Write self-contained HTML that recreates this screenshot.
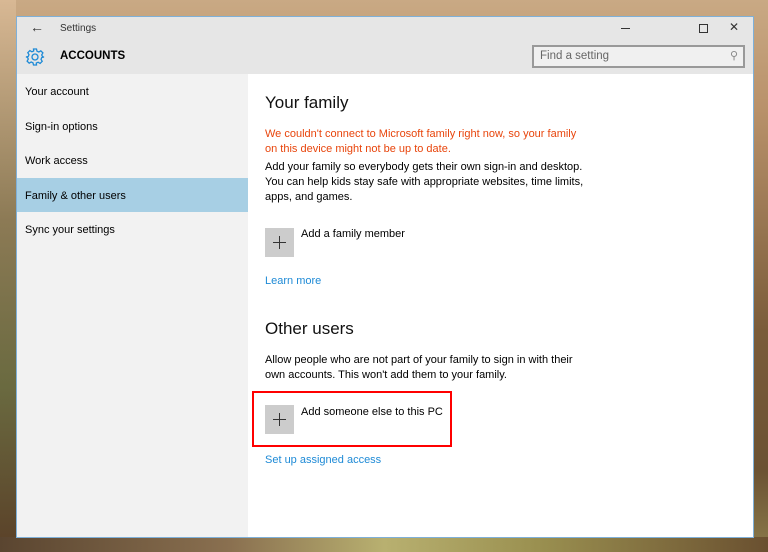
<!DOCTYPE html>
<html><head><style>
*{margin:0;padding:0;box-sizing:border-box}
body{width:768px;height:552px;overflow:hidden;position:relative;font-family:"Liberation Sans",sans-serif;
background:linear-gradient(180deg,#c9a984 0%,#b8916a 20%,#7a5c3a 60%,#6b5233 85%,#8a7a4a 100%);}
.bgl{position:absolute;left:0;top:0;width:16px;height:552px;background:linear-gradient(180deg,#d8b894,#8c7a55 40%,#6a6a40 70%,#5a4028)}
.bgb{position:absolute;left:0;top:537px;width:768px;height:15px;background:linear-gradient(90deg,#5a4530,#8a7050 30%,#b8b070 50%,#9a9050 70%,#6a5030)}
.win{position:absolute;left:16px;top:16px;width:738px;height:522px;border:1px solid #7fb0d8;background:#fff}
.title{position:absolute;left:0;top:0;width:736px;height:57px;background:#e6e6e6}
.side{position:absolute;left:0;top:57px;width:231px;height:463px;background:#f2f2f2}
.t{position:absolute;font-size:12px;color:#000;white-space:nowrap}
.link{color:#1e8ad6}
.plus{position:absolute;width:29px;height:29px;background:#cccccc}
.plus:before{content:"";position:absolute;left:8px;top:14px;width:13px;height:1px;background:#333}
.plus:after{content:"";position:absolute;left:14px;top:8px;width:1px;height:13px;background:#333}
</style></head><body>
<div class="bgl"></div><div class="bgb"></div>
<div class="win">
 <div class="title">
  <div class="t" style="left:13px;top:2px;font-size:14px;color:#333">&#8592;</div>
  <div class="t" style="left:43px;top:6px;font-size:10px;color:#333">Settings</div>
  <div style="position:absolute;left:604px;top:11px;width:9px;height:1px;background:#333"></div>
  <div style="position:absolute;left:682px;top:7px;width:9px;height:9px;border:1px solid #333"></div>
  <div class="t" style="left:712px;top:3px;font-size:12px;color:#333">&#10005;</div>
  <svg style="position:absolute;left:8px;top:30px" width="20" height="20" viewBox="0 0 20 20"><g fill="none" stroke="#1e8ad6" stroke-width="1.3"><circle cx="10" cy="10" r="3"/><path d="M8.5 2h3l.5 2.2 1.8.8 2-1.2 2.1 2.1-1.2 2 .8 1.8L19 10v0l-2.2.5-.8 1.8 1.2 2-2.1 2.1-2-1.2-1.8.8L11.5 18h-3l-.5-2.2-1.8-.8-2 1.2-2.1-2.1 1.2-2-.8-1.8L1 10l2.2-.5.8-1.8-1.2-2 2.1-2.1 2 1.2 1.8-.8z"/></g></svg>
  <div class="t" style="left:43px;top:33px;font-size:11.5px;font-weight:bold">ACCOUNTS</div>
  <div style="position:absolute;left:515px;top:28px;width:213px;height:23px;border:2px solid #999;background:#f0f0f0"></div>
  <div class="t" style="left:523px;top:33px;font-size:11.5px;color:#666">Find a setting</div>
  <div class="t" style="left:713px;top:32px;font-size:11px;color:#888">&#9906;</div>
 </div>
 <div class="side">
  <div class="t" style="left:8px;top:12px;font-size:11px">Your account</div>
  <div class="t" style="left:8px;top:47px;font-size:11px">Sign-in options</div>
  <div class="t" style="left:8px;top:81px;font-size:11px">Work access</div>
  <div style="position:absolute;left:0;top:104px;width:231px;height:34px;background:#a7cfe4"></div>
  <div class="t" style="left:8px;top:116px;font-size:11px">Family &amp; other users</div>
  <div class="t" style="left:8px;top:150px;font-size:11px">Sync your settings</div>
 </div>
 <div class="t" style="left:248px;top:76px;font-size:17px;color:#111">Your family</div>
 <div class="t" style="left:248px;top:110px;font-size:11px;line-height:15px;color:#e8450c">We couldn't connect to Microsoft family right now, so your family<br>on this device might not be up to date.</div>
 <div class="t" style="left:248px;top:143px;font-size:11px;line-height:15px">Add your family so everybody gets their own sign-in and desktop.<br>You can help kids stay safe with appropriate websites, time limits,<br>apps, and games.</div>
 <div class="plus" style="left:248px;top:211px"></div>
 <div class="t" style="left:284px;top:211px;font-size:11px">Add a family member</div>
 <div class="t link" style="left:248px;top:258px;font-size:11px">Learn more</div>
 <div class="t" style="left:248px;top:302px;font-size:17px;color:#111">Other users</div>
 <div class="t" style="left:248px;top:336px;font-size:11px;line-height:15px">Allow people who are not part of your family to sign in with their<br>own accounts. This won't add them to your family.</div>
 <div style="position:absolute;left:235px;top:374px;width:200px;height:56px;border:2px solid #f00"></div>
 <div class="plus" style="left:248px;top:388px"></div>
 <div class="t" style="left:284px;top:389px;font-size:11px">Add someone else to this PC</div>
 <div class="t link" style="left:248px;top:437px;font-size:11px">Set up assigned access</div>
</div>
</body></html>
